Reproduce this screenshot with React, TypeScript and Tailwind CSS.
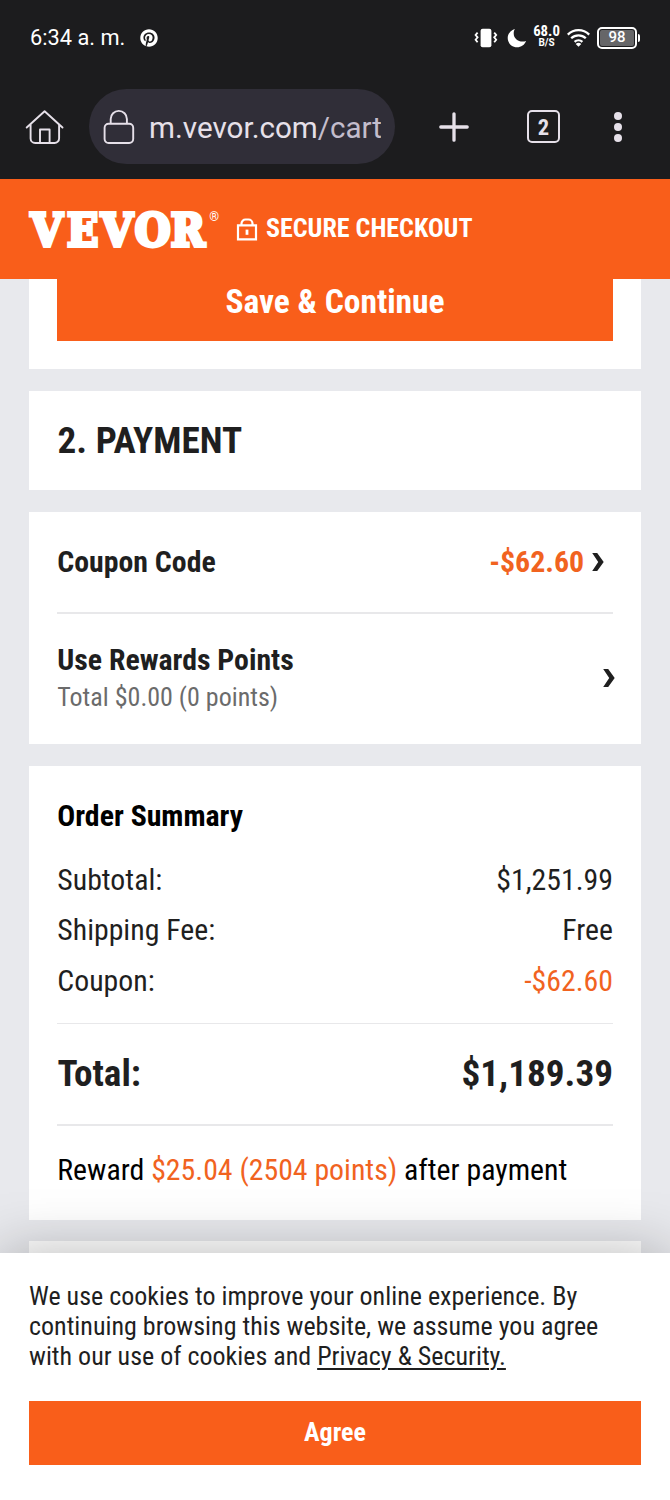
import React from "react";
import { FaPinterest } from "react-icons/fa";

const ORANGE = "text-[#f1631f]";

function StatusBar() {
  return (
    <div className="flex h-[75px] items-center justify-between pl-[30px] pr-[30px] text-white">
      <div className="flex items-center gap-[15px]">
        <span className="pt-px text-[21.8px] leading-[26px]">6:34 a. m.</span>
        <FaPinterest className="size-[18px]" />
      </div>
      <div className="flex items-center">
        <svg className="h-[20px] w-[24px]" viewBox="0 0 24 20" fill="none">
          <rect x="6.6" y="0.8" width="10.8" height="18.4" rx="2" fill="#fff" />
          <path d="M3.6 4.6 1.6 7l2 2.3-2 2.4 2 2.6M20.2 4.6l2 2.4-2 2.3 2 2.4-2 2.6" stroke="#fff" strokeWidth="1.8" />
        </svg>
        <svg className="ml-[9px] h-[20px] w-[20px]" viewBox="0 0 20 20">
          <path d="M8 .8C3.700 2.200.7 6 .7 10.100c0 5.200 4.300 9.200 9.400 9.200 4 0 7.600-2.500 9-6.300-1.200.4-2.300.6-3.400.6-5.200 0-9-3.600-9-8.200 0-1.700.4-3.300 1.300-4.600Z" fill="#fff" />
        </svg>
        <div className="ml-[6px] flex w-[27px] flex-col items-center pb-[3px] font-bold">
          <span className="font-['Roboto_Condensed'] text-[14.800px] leading-[14px]">68.0</span>
          <span className="text-[10px] leading-[10px]">B/S</span>
        </div>
        <svg className="ml-[7px] h-[20px] w-[23px]" viewBox="0 0 23 20" fill="none" stroke="#fff" strokeWidth="2.300">
          <path d="M.8 6.600C6.800.7 16.200.7 22.200 6.600M4.200 10.300c4.100-4 10.500-4 14.600 0M7.600 13.900c2.200-2.100 5.600-2.100 7.800 0" />
          <path d="M8.700 16 11.500 18.800 14.300 16a4 4 0 0 0-5.600 0Z" fill="#fff" stroke="none" />
        </svg>
        <div className="ml-[7px] flex items-center gap-px">
          <div className="flex h-[22px] w-[40px] rounded-[5px] border-2 border-white p-px">
            <div className="flex flex-1 items-center justify-center rounded-[2px] bg-[#666668] text-[15px] font-medium leading-none">98</div>
          </div>
          <div className="h-[8px] w-[2px] rounded-r bg-white" />
        </div>
      </div>
    </div>
  );
}

function BrowserBar() {
  return (
    <div className="flex h-[103px] items-center pl-[24px] text-[#e6e0e9]">
      <svg className="h-[40px] w-[42px]" viewBox="0 0 42 40" fill="none" stroke="currentColor" strokeWidth="1.900" strokeLinecap="round" strokeLinejoin="round">
        <path d="M2.700 20.500 20.600 4.200 38.500 20.500M6.600 17.300V31.500a4.500 4.500 0 0 0 4.500 4.500H30.600a4.500 4.500 0 0 0 4.500-4.500V17.300M16 36V22.500h9.600V36" />
      </svg>
      <div className="ml-[23px] flex h-[75px] w-[306px] items-center rounded-full bg-[#302e38] pl-[14px]">
        <svg className="h-[36px] w-[32px]" viewBox="0 0 32 36" fill="none" stroke="currentColor" strokeWidth="1.900">
          <rect x="1.600" y="14.700" width="28.600" height="19.300" rx="4" />
          <path d="M7.700 14.700V10a8.100 8.100 0 0 1 16.200 0v4.700" />
        </svg>
        <div className="ml-[14px] w-[232px] overflow-hidden whitespace-nowrap pt-[2px] text-[29.6px] leading-[40px]">
          m.vevor.com<span className="text-[#c3bdcc]">/cart</span>
        </div>
      </div>
      <svg className="ml-[43px] h-[32px] w-[32px]" viewBox="0 0 32 32" stroke="currentColor" strokeWidth="3.300" strokeLinecap="round">
        <path d="M16 2.800v26.400M2.800 16h26.400" />
      </svg>
      <div className="ml-[57px] flex h-[33px] w-[33px] items-center justify-center rounded-[5px] border-2 border-[#e6e0e9] pt-px font-['Roboto_Condensed'] text-[22.500px] font-bold leading-none">2</div>
      <svg className="ml-[53px] h-[32px] w-[10px]" viewBox="0 0 10 32" fill="currentColor">
        <circle cx="5" cy="5" r="4" />
        <circle cx="5" cy="16" r="4" />
        <circle cx="5" cy="27" r="4" />
      </svg>
    </div>
  );
}

function SiteHeader() {
  return (
    <header className="flex h-[100px] items-center bg-[#f95e1a] pl-[29px] text-white">
      <svg className="h-[44px] w-[192px] shrink-0 overflow-visible" viewBox="29 207 192 44" fill="#fff">
        <text transform="scale(.93 1)" x="33 72 108.500 145 183.500" y="246" fontFamily="DejaVu Serif" fontWeight="700" fontSize="44.200" stroke="#fff" strokeWidth="3.800" strokeLinejoin="miter">VEVOR</text>
        <text x="209.200" y="220.500" fontFamily="Roboto" fontSize="12.500">®</text>
      </svg>
      <svg className="ml-[15px] h-[24px] w-[22px]" viewBox="0 0 22 24" fill="none" stroke="#fff" strokeWidth="2.200">
        <path d="M2 8.300h18v14H2ZM5.500 8.300V6.500a4 4 0 0 1 4-4h3a4 4 0 0 1 4 4v1.800" />
        <path d="M11 12.600v5.200" strokeWidth="2.800" />
      </svg>
      <span className="ml-[8px] pb-[2px] text-[26px] font-bold leading-[40px]">SECURE CHECKOUT</span>
    </header>
  );
}

function Chevron() {
  return (
    <svg className="h-[18px] w-[12px]" viewBox="0 0 12 18" fill="#1f1f1f">
      <path d="M.2 0h5L11.700 9 5.200 18h-5L6.200 9Z" />
    </svg>
  );
}

function SummaryRow({ label, value, accent }: { label: string; value: string; accent?: boolean }) {
  return (
    <div className="flex h-[50.300px] items-center justify-between">
      <span>{label}</span>
      <span className={accent ? ORANGE : ""}>{value}</span>
    </div>
  );
}

export default function App() {
  return (
    <div className="flex h-[1500px] w-[670px] flex-col overflow-hidden bg-[#e8e9ed] font-['Roboto_Condensed','Roboto',sans-serif] text-[#1f1f1f]">
      <div className="h-[179px] shrink-0 bg-[#1c1c1e] font-['Roboto',sans-serif]">
        <StatusBar />
        <BrowserBar />
      </div>
      <SiteHeader />

      <main className="flex h-[974px] shrink-0 flex-col gap-[22px] overflow-hidden px-[29px] text-[29.8px] leading-[40px]">
        <section className="h-[90px] shrink-0 bg-white px-[28px]">
          <button className="block h-[61.500px] w-full bg-[#f95e1a] pb-[16px] text-[33.5px] font-bold leading-[45.500px] text-white">Save &amp; Continue</button>
        </section>

        <section className="flex h-[99px] shrink-0 items-center bg-white pb-[2px] pl-[28.500px]">
          <h2 className="text-[37.200px] font-bold">2. PAYMENT</h2>
        </section>

        <section className="h-[232px] shrink-0 bg-white px-[28px]">
          <div className="flex h-[102px] items-center border-b-2 border-[#e8e8ea] pb-px pl-[.3px] pr-[9px] font-bold">
            <span className="flex-1">Coupon Code</span>
            <span className={ORANGE}>-$62.60</span>
            <span className="ml-[8px]"><Chevron /></span>
          </div>
          <div className="flex h-[130px] items-center justify-between pb-[2px] pl-[.3px]">
            <div>
              <div className="font-bold leading-[37px]">Use Rewards Points</div>
              <div className="text-[26px] leading-[38px] text-[#6b6b6b]">Total $0.00 (0 points)</div>
            </div>
            <span className="-mr-[2px]"><Chevron /></span>
          </div>
        </section>

        <section className="h-[454px] shrink-0 bg-white px-[28px] pt-[30px]">
          <h3 className="mb-[19px] pl-[.3px] font-bold text-black">Order Summary</h3>
          <div className="pl-[.3px]">
            <SummaryRow label="Subtotal:" value="$1,251.99" />
            <SummaryRow label="Shipping Fee:" value="Free" />
            <SummaryRow label="Coupon:" value="-$62.60" accent />
          </div>
          <div className="mt-[17px] flex h-[103px] items-center justify-between border-b-2 border-t border-[#e8e8ea] pb-px pl-[.5px] text-[37.200px] font-bold">
            <span>Total:</span>
            <span>$1,189.39</span>
          </div>
          <p className="mt-[24.500px] pl-[.3px] text-black">
            Reward <span className={ORANGE}>$25.04 (2504 points)</span> after payment
          </p>
        </section>

        <section className="-mt-px h-[60px] shrink-0 bg-white" />
      </main>

      <footer className="relative flex-1 bg-white px-[29px] pt-[28px] shadow-[0_0_56px_rgba(0,0,0,0.28)]">
        <p className="text-[26px] leading-[30px]">
          We use cookies to improve your online experience. By<br />
          continuing browsing this website, we assume you agree<br />
          with our use of cookies and{" "}
          <a className="underline decoration-2 underline-offset-[3px]">Privacy &amp; Security.</a>
        </p>
        <button className="mt-[29.500px] block h-[64px] w-full bg-[#f95e1a] text-[26px] font-bold text-white">Agree</button>
      </footer>
    </div>
  );
}
